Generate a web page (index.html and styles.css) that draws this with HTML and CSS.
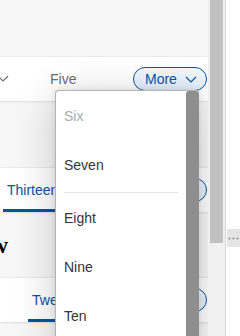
FILE: index.html
```html
<!DOCTYPE html>
<html>
<head>
<meta charset="utf-8">
<link rel="stylesheet" href="styles.css">
</head>
<body>
<div class="app">
  <div class="pane">
    <div class="content">
      <div class="gray top"></div>
      <div class="bar">
        <svg class="chev-left" width="12" height="8" viewBox="0 0 12 8"><polyline points="1,1 6,6 11,1" fill="none" stroke="#6a6d70" stroke-width="1.1"/></svg>
        <span class="tab five">Five</span>
        <span class="more">More<svg width="12" height="7" viewBox="0 0 12 7"><polyline points="1,1 6,6 11,1" fill="none" stroke="#0854a0" stroke-width="1.2"/></svg></span>
      </div>
      <div class="gray g1"></div>
      <div class="bar">
        <span class="tab sel first">Thirteen</span>
        <span class="more">More<svg width="12" height="7" viewBox="0 0 12 7"><polyline points="1,1 6,6 11,1" fill="none" stroke="#0854a0" stroke-width="1.2"/></svg></span>
      </div>
      <div class="gray g2"><h2 class="title">Overflow</h2></div>
      <div class="bar">
        <span class="tab sel second">Twelve</span>
        <span class="more">More<svg width="12" height="7" viewBox="0 0 12 7"><polyline points="1,1 6,6 11,1" fill="none" stroke="#0854a0" stroke-width="1.2"/></svg></span>
      </div>
      <div class="gray g3"></div>

      <div class="popup">
        <ul class="list">
          <li class="item disabled">Six</li>
          <li class="item">Seven</li>
          <li class="sep"></li>
          <li class="item">Eight</li>
          <li class="item">Nine</li>
          <li class="item">Ten</li>
        </ul>
        <div class="pthumb"></div>
      </div>
    </div>
    <div class="vscroll"><div class="thumb"></div></div>
  </div>
  <div class="side">
    <div class="handle"><svg width="11" height="3" viewBox="0 0 11 3"><circle cx="1.5" cy="1.5" r="1" fill="#8a8a8a"/><circle cx="5.5" cy="1.5" r="1" fill="#8a8a8a"/><circle cx="9.5" cy="1.5" r="1" fill="#8a8a8a"/></svg></div>
  </div>
</div>
</body>
</html>
```

FILE: styles.css
```css
* { box-sizing: border-box; }
html, body { margin: 0; padding: 0; }
body {
  width: 240px;
  height: 336px;
  overflow: hidden;
  background: #fff;
  font-family: "Liberation Sans", Arial, sans-serif;
}
.app {
  display: flex;
  width: 240px;
  height: 336px;
}
.pane {
  display: flex;
  width: 226px;
  height: 336px;
  border-right: 1px solid #d6d6d6;
}
.content {
  position: relative;
  width: 208px;
  height: 336px;
  overflow: hidden;
  background: #f7f7f7;
  display: flex;
  flex-direction: column;
}
.gray { background: #f7f7f7; flex: none; }
.top { height: 57px; }
.g1 { height: 67px; }
.g2 { height: 66px; overflow: hidden; }
.g3 { height: 14px; }
.bar {
  flex: none;
  height: 44px;
  background: #fff;
  display: flex;
  align-items: center;
  padding-right: 1px;
  box-shadow: 0 0 2px rgba(0,0,0,0.12), 0 1px 3px rgba(0,0,0,0.06);
  position: relative;
}
.chev-left { margin-left: -3px; flex: none; }
.tab {
  font-size: 14px;
  color: #6a6d70;
  line-height: 16px;
  white-space: nowrap;
}
.five { margin-left: 41px; }
.sel {
  color: #0854a0;
  align-self: stretch;
  display: flex;
  align-items: center;
  border-bottom: 3px solid #0854a0;
  padding-top: 3px;
}
.first { margin-left: 3px; padding-left: 4px; padding-right: 4px; }
.second { margin-left: 28px; padding-left: 4px; padding-right: 4px; }
.more {
  margin-left: auto;
  flex: none;
  width: 74px;
  height: 24px;
  border: 1px solid #0854a0;
  border-radius: 12px;
  background: linear-gradient(#f3f8fd, #e3eefa);
  color: #0854a0;
  font-size: 14px;
  display: flex;
  align-items: center;
  padding-left: 11px;
  gap: 8px;
}
.more svg { flex: none; margin-top: 1px; }
.title {
  margin: 19px 0 0 -88px;
  font-family: "Liberation Serif", "Times New Roman", serif;
  font-weight: bold;
  font-size: 24px;
  line-height: 28px;
  color: #000;
  white-space: nowrap;
}
.popup {
  position: absolute;
  left: 55px;
  top: 90px;
  width: 144px;
  height: 260px;
  background: #fff;
  border: 1px solid #b4b4b4;
  border-right: none;
  border-radius: 4px 4px 0 0;
  box-shadow: 0 8px 44px rgba(0,0,0,0.2), 0 0 6px rgba(0,0,0,0.1);
  display: flex;
  overflow: hidden;
}
.list {
  list-style: none;
  margin: 0;
  padding: 0;
  flex: 1;
}
.item {
  height: 49px;
  display: flex;
  align-items: center;
  padding-left: 8px;
  font-size: 14px;
  color: #32363a;
}
.disabled { color: #a9abad; }
.sep {
  height: 1px;
  margin: 3px 8px 0 8px;
  background: #e5e5e5;
}
.pthumb {
  width: 13px;
  flex: none;
  background: #8e8e8e;
  border-radius: 3px 0 0 0;
}
.vscroll {
  width: 17px;
  height: 336px;
  background: #f1f1f1;
  padding-left: 2px;
  flex: none;
}
.thumb {
  width: 13px;
  height: 243px;
  background: #c1c1c1;
}
.side {
  flex: 1;
  background: #fff;
  padding-top: 229px;
  padding-left: 1px;
}
.handle {
  height: 18px;
  background: #e5e5e5;
  display: flex;
  align-items: center;
  justify-content: center;
}
.handle svg { display: block; }
```
